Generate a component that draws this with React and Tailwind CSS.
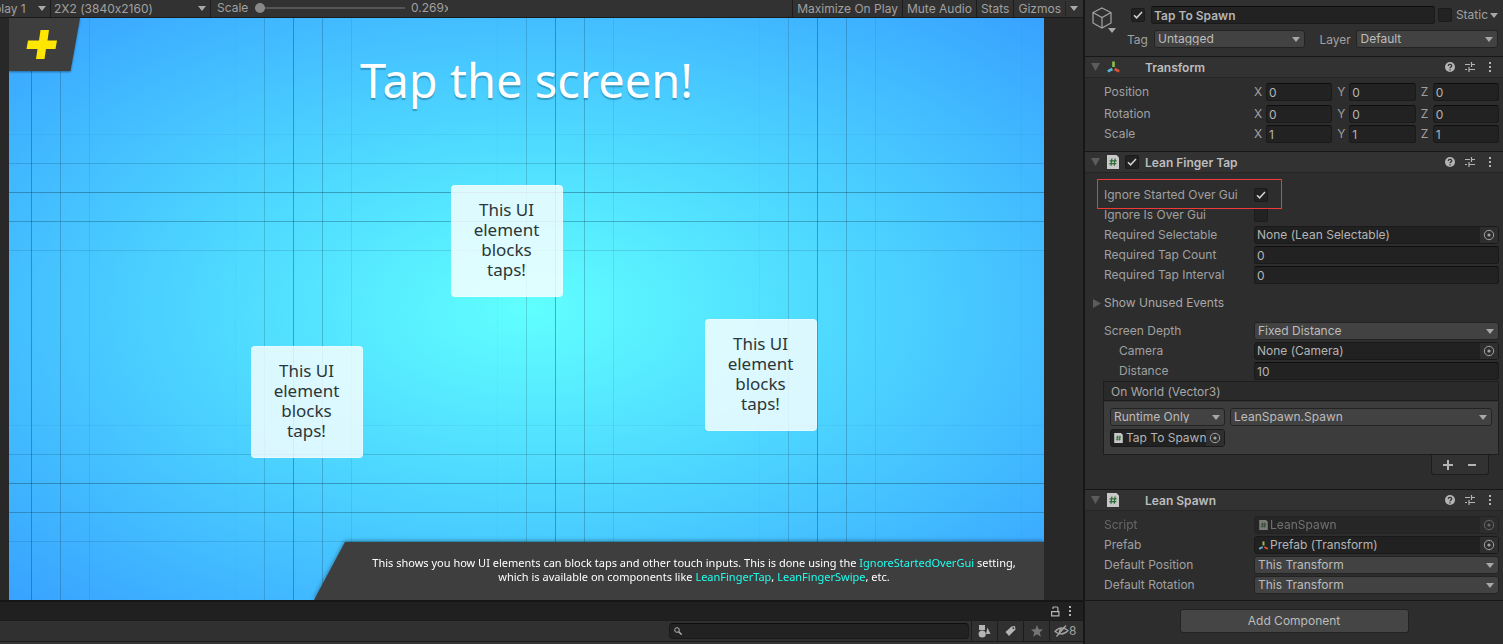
import { useState } from 'react';

const Caret = ({ className = '' }) => (
  <svg viewBox="0 0 8 5" className={`pointer-events-none h-[5px] w-2 shrink-0 fill-[#a8a8a8] ${className}`}>
    <path d="M0 0h8L4 5z" />
  </svg>
);

const ScriptIcon = ({ className = '' }) => (
  <svg viewBox="0 0 12 14" className={`shrink-0 ${className}`}>
    <path d="M0 0h9.5L12 2.5V14H0z" fill="#c8c8c8" />
    <path d="M4.9 3.5 4 10.8M8.1 3.5l-.9 7.3M2.6 5.8h7M2.3 8.6h7" stroke="#2c6b35" strokeWidth="1.2" fill="none" />
  </svg>
);

const TransformIcon = ({ className = '' }) => (
  <svg viewBox="0 0 13 12" className={`shrink-0 ${className}`}>
    <path d="M6.5 .5v5.5" stroke="#8bc34a" strokeWidth="2.6" />
    <path d="M5.4 8 .8 10.4" stroke="#5fb4d8" strokeWidth="2.6" />
    <path d="M7.6 8l4.6 2.4" stroke="#dd5533" strokeWidth="2.6" />
  </svg>
);

const DotsIcon = () => (
  <svg viewBox="0 0 4 12" className="h-3 w-1 shrink-0 fill-[#b4b4b4]">
    <path d="M1 1h2v2H1zM1 5h2v2H1zM1 9h2v2H1z" />
  </svg>
);

const TargetIcon = () => (
  <svg viewBox="0 0 12 12" className="h-3 w-3" fill="none" stroke="#a4a4a4">
    <circle cx="6" cy="6" r="4.7" />
    <circle cx="6" cy="6" r="1.6" fill="#a4a4a4" stroke="none" />
  </svg>
);

const Check = ({ label, id, defaultChecked = false }) => (
  <span className="grid h-3.5 w-3.5 shrink-0 place-items-center">
    <input
      id={id}
      type="checkbox"
      aria-label={label}
      defaultChecked={defaultChecked}
      className="peer col-start-1 row-start-1 h-3.5 w-3.5 appearance-none rounded-[2px] border border-[#1b1b1b] bg-[#222222]"
    />
    <svg
      viewBox="0 0 10 10"
      className="pointer-events-none invisible col-start-1 row-start-1 h-2.5 w-2.5 fill-none stroke-[#d2d2d2] stroke-[1.5] peer-checked:visible"
    >
      <path d="M1 5.2 3.6 7.8 9 2" />
    </svg>
  </span>
);

const Dropdown = ({ id, label, value, className = '' }) => (
  <span className={`grid h-[18px] items-center ${className}`}>
    <select
      id={id}
      aria-label={label}
      className="col-start-1 row-start-1 h-[18px] w-full min-w-0 appearance-none rounded-[3px] border border-[#232323] bg-[#424242] pb-0.5 pl-[3px] leading-4 text-[#bcbcbc]"
    >
      <option>{value}</option>
    </select>
    <Caret className="col-start-1 row-start-1 mr-[5px] justify-self-end" />
  </span>
);

const inputClass =
  'h-[18px] w-full min-w-0 rounded-[3px] border border-[#1a1a1a] border-t-[#0e0e0e] bg-[#222222] px-[2px] leading-4 text-[#b4b4b4]';

const ObjectField = ({ id, label, value, icon, className = '' }) => (
  <span
    className={`flex h-[18px] min-w-0 items-center rounded-[3px] border border-[#1a1a1a] bg-[#212121] pl-[2px] ${className}`}
  >
    {icon}
    <input id={id} aria-label={label} readOnly defaultValue={value} className="w-0 min-w-0 flex-1 leading-4 text-[#b4b4b4]" />
    <button type="button" aria-label="Select object" className="grid h-4 w-[18px] place-items-center bg-[#2e2e2e]">
      <TargetIcon />
    </button>
  </span>
);

const Row = ({ label, id, indent = false, dim = false, children }) => (
  <div className={`flex h-5 items-center ${dim ? 'opacity-50' : ''}`}>
    <label htmlFor={id} className={`w-[150px] shrink-0 whitespace-nowrap ${indent ? 'pl-[15px]' : ''}`}>
      {label}
    </label>
    {children}
  </div>
);

const VectorRow = ({ label, value }) => (
  <div className="flex h-5 items-center" role="group" aria-label={label}>
    <span className="w-[150px] shrink-0">{label}</span>
    <div className="grid flex-1 grid-cols-3 gap-[5px]">
      {['X', 'Y', 'Z'].map((axis) => (
        <label key={axis} className="flex items-center">
          <span className="w-3 shrink-0">{axis}</span>
          <input className={inputClass} defaultValue={value} />
        </label>
      ))}
    </div>
  </div>
);

const ComponentHeader = ({ title, icon, toggle }) => (
  <header className="flex h-[22px] items-center border-t border-b border-t-[#171717] border-b-[#262626] bg-[#323232] pr-2 pl-1.5">
    <button type="button" aria-label={`Collapse ${title}`} className="w-[15px]">
      <svg viewBox="0 0 9 8" className="h-2 w-[9px] fill-[#5c5c5c]">
        <path d="M0 0h9L4.5 8z" />
      </svg>
    </button>
    <span className="flex w-[19px] items-center">{icon}</span>
    <span className="flex w-5 items-center">{toggle}</span>
    <h2 className="flex-1 pt-0.5 font-semibold text-[#bdbdbd]">{title}</h2>
    <div className="flex items-center gap-2.5">
      <button type="button" aria-label="Help">
        <svg viewBox="0 0 10 10" className="h-2.5 w-2.5">
          <circle cx="5" cy="5" r="5" fill="#b4b4b4" />
          <path d="M3.3 4a1.7 1.5 0 1 1 2.5 1.200Q5 5.600 5 6.300M5 7.200v1.300" fill="none" stroke="#323232" strokeWidth="1.3" />
        </svg>
      </button>
      <button type="button" aria-label="Presets">
        <svg viewBox="0 0 10 10" className="h-2.5 w-2.5" fill="none" stroke="#b4b4b4" strokeWidth="1.2">
          <path d="M0 2.500h5M7 2.500h3M6.500 0v5M0 7.500h2M4.500 7.500H10M4 5v5" />
        </svg>
      </button>
      <button type="button" aria-label="More" className="grid w-2.5 place-items-center">
        <DotsIcon />
      </button>
    </div>
  </header>
);

const BlockCard = ({ className }) => (
  <div
    className={`absolute flex h-28 w-28 justify-center rounded-[4px] border border-white/30 bg-white/80 px-5 pt-3.5 text-center text-[17px] leading-5 text-[#2b3638] ${className}`}
  >
    This UI element blocks taps!
  </div>
);

const GridLines = () => (
  <svg className="absolute inset-0 h-full w-full" aria-hidden="true">
    <defs>
      <pattern id="columns" x="-36" y="0" width="262" height="600" patternUnits="userSpaceOnUse">
        <g stroke="#103a4c">
          <path d="M.5 0v600" strokeOpacity=".03" />
          <path d="M29.5 0v600" strokeOpacity=".2" />
          <path d="M58.5 0v600" strokeOpacity=".38" />
          <path d="M87.5 0v600" strokeOpacity=".26" />
          <path d="M116.5 0v600" strokeOpacity=".1" />
        </g>
      </pattern>
      <pattern id="rows" x="0" y="-175" width="1200" height="291" patternUnits="userSpaceOnUse">
        <g stroke="#103a4c">
          <path d="M0 .5h1200" strokeOpacity=".06" />
          <path d="M0 29.5h1200" strokeOpacity=".2" />
          <path d="M0 58.5h1200" strokeOpacity=".38" />
          <path d="M0 87.5h1200" strokeOpacity=".32" />
          <path d="M0 116.5h1200" strokeOpacity=".15" />
        </g>
      </pattern>
    </defs>
    <rect width="100%" height="100%" fill="url(#columns)" />
    <rect width="100%" height="100%" fill="url(#rows)" />
  </svg>
);

const GameToolbar = () => {
  const [scale, setScale] = useState(0);

  return (
    <div className="flex h-[18px] items-stretch border-b border-[#1a1a1a] bg-[#323232] leading-[15px] whitespace-nowrap">
      <div className="flex w-[51px] items-center justify-end overflow-hidden border-r border-[#1c1c1c] pr-1">
        <select aria-label="Display" className="w-[62px] shrink-0 appearance-none">
          <option>Display 1</option>
        </select>
        <Caret />
      </div>
      <div className="flex w-40 items-center border-r border-[#1c1c1c] pr-1 pl-[3px]">
        <select aria-label="Resolution" className="flex-1 appearance-none">
          <option>2X2 (3840x2160)</option>
        </select>
        <Caret />
      </div>
      <label htmlFor="scale" className="w-11 pl-1.5">
        Scale
      </label>
      <input
        id="scale"
        type="range"
        value={scale}
        onChange={(event) => setScale(event.target.value)}
        className="h-4 w-[150px] appearance-none bg-transparent [&::-webkit-slider-runnable-track]:h-0.5 [&::-webkit-slider-runnable-track]:bg-[#555555] [&::-webkit-slider-thumb]:-mt-1 [&::-webkit-slider-thumb]:h-2.5 [&::-webkit-slider-thumb]:w-2.5 [&::-webkit-slider-thumb]:appearance-none [&::-webkit-slider-thumb]:rounded-full [&::-webkit-slider-thumb]:bg-[#888888]"
      />
      <span className="ml-1.5 w-[37px] overflow-hidden">0.269x</span>
      <div className="ml-auto flex">
        <button type="button" className="border-l border-[#1c1c1c] px-1">Maximize On Play</button>
        <button type="button" className="border-l border-[#1c1c1c] px-1">Mute Audio</button>
        <button type="button" className="border-l border-[#1c1c1c] px-1">Stats</button>
        <button type="button" className="border-l border-[#1c1c1c] px-1">Gizmos</button>
        <button type="button" aria-label="Gizmos options" className="my-px border-l border-[#242424] pr-[5px] pl-1">
          <Caret />
        </button>
      </div>
    </div>
  );
};

const GameView = () => (
  <div className="flex flex-1 bg-[#282828] pr-[39px] pl-[9px]">
    <main className="relative flex-1 overflow-hidden bg-[radial-gradient(ellipse_at_center,#60ffff_0%,#4dd6ff_45%,#38a2ff_100%)] font-['Noto_Sans',sans-serif]">
      <GridLines />
      <svg viewBox="0 0 76 60" className="absolute top-0 left-0 h-[60px] w-[76px] drop-shadow-[0_1px_1px_rgba(0,0,0,0.4)]">
        <path d="M0 0h71L61.5 53H0z" fill="#3e3e3e" />
        <path d="M31.5 12h8.500l-1.500 10.500H48L46.500 31H37l-1.500 10H27l1.500-10h-11L19 22.500h11z" fill="#ffe600" />
      </svg>
      <h1 className="relative pt-[30px] text-center text-[47px] leading-[64px] text-white [text-shadow:0_2px_1px_rgba(20,90,120,0.45)]">
        Tap the screen!
      </h1>
      <BlockCard className="top-[calc(50%-124px)] left-[calc(50%-76px)]" />
      <BlockCard className="top-[calc(50%+10px)] left-[calc(50%+178px)]" />
      <BlockCard className="top-[calc(50%+37px)] left-[calc(50%-276px)]" />
      <div className="absolute right-0 bottom-0 drop-shadow-[0_-1px_2px_rgba(0,0,0,0.4)]">
        <p className="w-[730px] bg-[#3e3e3e] pt-3.5 pr-4 pb-4 pl-[46px] text-center text-[11px] leading-3.5 text-white [clip-path:polygon(31px_0,100%_0,100%_100%,0_100%)]">
          This shows you how UI elements can block taps and other touch inputs. This is done using the{' '}
          <span className="text-[#1fffee]">IgnoreStartedOverGui</span> setting,
          <br />
          which is available on components like <span className="text-[#1fffee]">LeanFingerTap</span>,{' '}
          <span className="text-[#1fffee]">LeanFingerSwipe</span>, etc.
        </p>
      </div>
    </main>
  </div>
);

const filterClass = 'grid place-items-center border-l border-[#1c1c1c]';

const ProjectBar = () => (
  <div className="border-t-2 border-[#161616] bg-[#363636]">
    <div className="flex h-[18px] items-center justify-end gap-2 bg-[#202020] pr-[11px]">
      <button type="button" aria-label="Lock">
        <svg viewBox="0 0 10 11" className="h-[11px] w-2.5" fill="none" stroke="#b4b4b4" strokeWidth="1.2">
          <path d="M1.6 5.6h7.3v4.3H1.6zM3 3V1.6Q3 1 3.6 1H7q.9 0 .9.9v3.7" />
        </svg>
      </button>
      <button type="button" aria-label="More">
        <DotsIcon />
      </button>
    </div>
    <div className="flex h-[22px] items-stretch justify-end border-t border-b border-[#1c1c1c] bg-[#303030]">
      <label className="my-0.5 mr-0.5 flex h-4 w-[300px] items-center rounded-[4px] border border-[#1a1a1a] border-t-[#0e0e0e] bg-[#222222] pl-1">
        <svg viewBox="0 0 8 8" className="h-2 w-2" fill="none" stroke="#b4b4b4">
          <circle cx="3" cy="3" r="2.3" />
          <path d="M4.7 4.7 7.6 7.6" strokeWidth="1.4" />
        </svg>
        <input type="search" aria-label="Search assets" className="min-w-0 flex-1" />
      </label>
      <button type="button" aria-label="Filter by type" className={`w-[26px] ${filterClass}`}>
        <svg viewBox="0 0 13 13" className="h-[13px] w-[13px] fill-[#b4b4b4]">
          <path d="M1 0h6v5H1zM9.5 2.500 12.500 9H8z" />
          <circle cx="4.2" cy="9" r="3.6" />
        </svg>
      </button>
      <button type="button" aria-label="Filter by label" className={`w-[26px] ${filterClass}`}>
        <svg viewBox="0 0 11 10" className="h-2.5 w-[11px]">
          <path d="M6.5.5 10 0l.5 3.500L4 10 .5 6z" fill="#b4b4b4" />
          <circle cx="8.400" cy="2.200" r=".9" fill="#303030" />
        </svg>
      </button>
      <button type="button" aria-label="Favorites" className={`w-[26px] ${filterClass}`}>
        <svg viewBox="0 0 12 12" className="h-3 w-3 fill-[#747474]">
          <path d="m6 0 1.700 4.200 4.300.3L8.800 7.300l1 4.400L6 9.300l-3.800 2.400 1-4.400L0 4.500l4.300-.3z" />
        </svg>
      </button>
      <button type="button" className="flex w-[34px] items-center border-l border-[#1c1c1c] pl-1">
        <svg viewBox="0 0 15 12" className="h-3 w-[15px]" fill="none" stroke="#a4a4a4" strokeWidth="1.3">
          <path d="M1 6.500Q7 0 14 5.500 8 12 1 6.500zM2.500 11.500 12 .5M5.500 7.500Q5 5 7.500 3.800" />
        </svg>
        8
      </button>
    </div>
    <div className="h-0.5" />
  </div>
);

const ObjectHeader = () => (
  <div className="flex h-14 gap-2 bg-[#303030] pt-1.5 pr-[5px] pl-[7px]">
    <button type="button" aria-label="Object icon" className="flex h-[27px] w-[27px] items-end">
      <svg viewBox="0 0 20 22" className="mb-1 h-[22px] w-5 shrink-0" fill="none" stroke="#a4a4a4" strokeWidth="1.2">
        <path d="M10 1 19 5.500v10.500L10 21 1 16V5.500zM1 5.500 10 10.500l9-5M10 10.500V21" />
      </svg>
      <Caret className="-ml-1" />
    </button>
    <div className="flex-1">
      <div className="flex items-center">
        <span className="ml-1 flex">
          <Check label="Active" defaultChecked />
        </span>
        <input aria-label="Name" defaultValue="Tap To Spawn" className={`ml-1.5 flex-1 font-semibold ${inputClass}`} />
        <span className="ml-[3px] flex">
          <Check id="static" label="Static" />
        </span>
        <label htmlFor="static" className="ml-1">
          Static
        </label>
        <Caret className="ml-0.5" />
      </div>
      <div className="mt-1.5 flex h-[18px] items-center">
        <label htmlFor="tag" className="w-[27px] pt-0.5">
          Tag
        </label>
        <Dropdown id="tag" value="Untagged" className="flex-[152]" />
        <label htmlFor="layer" className="ml-3.5 w-[37px] pt-0.5">
          Layer
        </label>
        <Dropdown id="layer" value="Default" className="flex-[142]" />
      </div>
    </div>
  </div>
);

const EventList = () => (
  <div>
    <h3 className="-ml-px h-5 border border-[#1d1d1d] bg-[#2a2a2a] pl-[7px] leading-5 text-[#a8a8a8]">On World (Vector3)</h3>
    <div className="-ml-px flex h-[54px] flex-wrap content-start gap-x-[5px] gap-y-[3px] border border-[#1d1d1d] border-t-[#333333] bg-[#3c3c3c] px-1.5 pt-1.5">
      <Dropdown label="Call state" value="Runtime Only" className="w-[115px]" />
      <Dropdown label="Function" value="LeanSpawn.Spawn" className="flex-1" />
      <div className="w-full">
        <ObjectField
          label="Target"
          value="Tap To Spawn"
          className="w-[115px]"
          icon={<ScriptIcon className="mr-[3px] ml-px h-2.5 w-[9px]" />}
        />
      </div>
    </div>
    <div className="mr-2.5 ml-auto flex h-5 w-[58px] items-center justify-center gap-3.5 rounded-b-[3px] border border-t-0 border-[#1d1d1d] bg-[#323232]">
      <button type="button" aria-label="Add event">
        <svg viewBox="0 0 10 10" className="h-2.5 w-2.5" stroke="#b4b4b4" strokeWidth="2">
          <path d="M5 0v10M0 5h10" />
        </svg>
      </button>
      <button type="button" aria-label="Remove event">
        <svg viewBox="0 0 10 10" className="h-2.5 w-2.5" stroke="#b4b4b4" strokeWidth="2">
          <path d="M1 5h8" />
        </svg>
      </button>
    </div>
  </div>
);

const Inspector = () => (
  <aside className="w-[420px] shrink-0 border-l-2 border-[#171717] bg-[#2d2d2d]">
    <ObjectHeader />

    <ComponentHeader title="Transform" icon={<TransformIcon className="ml-px h-3 w-[13px]" />} />
    <div className="pt-1 pr-1 pb-[7px] pl-[19px]">
      <VectorRow label="Position" value="0" />
      <div className="mt-0.5">
        <VectorRow label="Rotation" value="0" />
      </div>
      <VectorRow label="Scale" value="1" />
    </div>

    <ComponentHeader
      title="Lean Finger Tap"
      icon={<ScriptIcon className="ml-px h-3.5 w-3" />}
      toggle={<Check label="Lean Finger Tap enabled" defaultChecked />}
    />
    <div className="pt-3 pr-1 pb-3.5 pl-[19px]">
      <div className="relative">
        <Row label="Ignore Started Over Gui" id="ignore-started">
          <Check id="ignore-started" defaultChecked />
        </Row>
        <div className="pointer-events-none absolute -top-1.5 -left-[7px] h-[30px] w-[185px] border border-[#f03a3a]" />
      </div>
      <Row label="Ignore Is Over Gui" id="ignore-is">
        <Check id="ignore-is" />
      </Row>
      <Row label="Required Selectable" id="selectable">
        <ObjectField id="selectable" value="None (Lean Selectable)" className="flex-1" />
      </Row>
      <Row label="Required Tap Count" id="tap-count">
        <input id="tap-count" defaultValue="0" className={inputClass} />
      </Row>
      <Row label="Required Tap Interval" id="tap-interval">
        <input id="tap-interval" defaultValue="0" className={inputClass} />
      </Row>
      <button type="button" className="mt-2 -ml-[11px] flex h-5 items-center gap-[3px] text-[#a8a8a8]">
        <svg viewBox="0 0 8 9" className="h-[9px] w-2 fill-[#5c5c5c]">
          <path d="M0 0v9l8-4.5z" />
        </svg>
        Show Unused Events
      </button>
      <div className="mt-2">
        <Row label="Screen Depth" id="depth">
          <Dropdown id="depth" value="Fixed Distance" className="flex-1" />
        </Row>
        <Row label="Camera" id="camera" indent>
          <ObjectField id="camera" value="None (Camera)" className="flex-1" />
        </Row>
        <Row label="Distance" id="distance" indent>
          <input id="distance" defaultValue="10" className={inputClass} />
        </Row>
      </div>
      <EventList />
    </div>

    <ComponentHeader title="Lean Spawn" icon={<ScriptIcon className="ml-px h-3.5 w-3" />} />
    <div className="border-b border-[#171717] pt-1 pr-1 pb-[5px] pl-[19px]">
      <Row label="Script" id="script" dim>
        <ObjectField
          id="script"
          value="LeanSpawn"
          className="flex-1"
          icon={<ScriptIcon className="mr-0.5 ml-0.5 h-2.5 w-[9px]" />}
        />
      </Row>
      <Row label="Prefab" id="prefab">
        <ObjectField
          id="prefab"
          value="Prefab (Transform)"
          className="flex-1"
          icon={<TransformIcon className="mr-px ml-px h-[9px] w-[11px]" />}
        />
      </Row>
      <Row label="Default Position" id="default-position">
        <Dropdown id="default-position" value="This Transform" className="flex-1" />
      </Row>
      <Row label="Default Rotation" id="default-rotation">
        <Dropdown id="default-rotation" value="This Transform" className="flex-1" />
      </Row>
    </div>

    <div className="flex justify-center py-2">
      <button type="button" className="h-6 w-[229px] rounded-[3px] border border-[#222222] bg-[#454545] text-[#bcbcbc]">
        Add Component
      </button>
    </div>
  </aside>
);

const App = () => (
  <div className="flex min-h-screen bg-[#171717] font-[Inter,sans-serif] text-[12px] leading-4 text-[#a0a0a0] [font-feature-settings:'calt'_0]">
    <div className="flex min-w-0 flex-1 flex-col">
      <GameToolbar />
      <GameView />
      <ProjectBar />
    </div>
    <Inspector />
  </div>
);

export default App;
